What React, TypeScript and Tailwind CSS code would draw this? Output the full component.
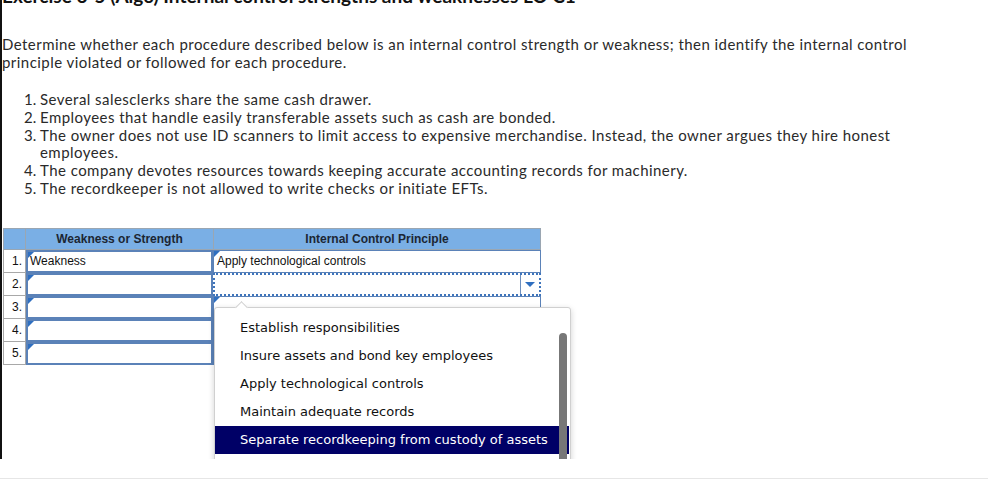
import React from "react";

const Flag = () => (
  <span className="absolute left-0 top-0 w-0 h-0 border-t-[6px] border-t-[#2f6fc0] border-r-[6px] border-r-transparent" />
);

const options = [
  "Establish responsibilities",
  "Insure assets and bond key employees",
  "Apply technological controls",
  "Maintain adequate records",
  "Separate recordkeeping from custody of assets",
];

const rows = [
  { n: "1.", ws: "Weakness", p: "Apply technological controls" },
  { n: "2.", ws: "", p: "" },
  { n: "3.", ws: "", p: "" },
  { n: "4.", ws: "", p: "" },
  { n: "5.", ws: "", p: "" },
];

export default function App() {
  return (
    <div className="w-[988px] h-[483px] bg-white overflow-hidden">
      <div className="relative h-[459px] border-l-2 border-[#111] overflow-hidden">
        <h1 className="mt-[-16px] text-[19px] leading-[24px] font-bold text-[#111] font-['Lato',sans-serif] whitespace-nowrap">
          Exercise 6-5 (Algo) Internal control strengths and weaknesses LO C1
        </h1>
        <p className="mt-[27px] text-[15px] leading-[18px] tracking-[0.45px] text-[#2a2a2a] font-['Lato',sans-serif] w-[915px]">
          Determine whether each procedure described below is an internal control strength or weakness; then identify the internal control principle violated or followed for each procedure.
        </p>
        <ol className="mt-[20px] pl-[22px] text-[15px] leading-[17.8px] tracking-[0.45px] text-[#2a2a2a] font-['Lato',sans-serif] w-[915px]">
          {[
            "Several salesclerks share the same cash drawer.",
            "Employees that handle easily transferable assets such as cash are bonded.",
            "The owner does not use ID scanners to limit access to expensive merchandise. Instead, the owner argues they hire honest employees.",
            "The company devotes resources towards keeping accurate accounting records for machinery.",
            "The recordkeeper is not allowed to write checks or initiate EFTs.",
          ].map((t, i) => (
            <li key={i} className="flex">
              <span className="w-[16px] shrink-0 tracking-normal">{i + 1}.</span>
              <span>{t}</span>
            </li>
          ))}
        </ol>

        <div className="mt-[30px] ml-[1px] w-[538px] font-['Liberation_Sans',Arial,sans-serif] text-[12px] text-[#111]">
          <div className="flex h-[22px] bg-[#7aafe5] border border-[#9aa6b2] font-bold text-[#1c2633]">
            <div className="w-[22px] border-r border-[#9aa6b2]" />
            <div className="w-[188px] flex items-center justify-center border-r border-[#9aa6b2]">Weakness or Strength</div>
            <div className="flex-1 flex items-center justify-center">Internal Control Principle</div>
          </div>
          {rows.map((r, i) => (
            <div key={i} className="flex h-[23px]">
              <div className="w-[23px] border-l border-b border-r border-[#a8a8a8] flex items-center justify-end pr-[3px] text-[12px]">
                {r.n}
              </div>
              <div className="relative w-[187px] border-2 border-[#5b82b8] bg-white flex items-center pl-[2px]">
                <Flag />
                {r.ws}
              </div>
              {i === 1 ? (
                <div className="relative flex-1 border-2 border-dotted border-[#3e74bb] bg-white flex">
                  <div className="flex-1" />
                  <div className="w-[19px] border-l border-[#6d8fbe] flex items-center justify-center">
                    <span className="w-0 h-0 border-l-[5px] border-r-[5px] border-t-[5px] border-l-transparent border-r-transparent border-t-[#2f6fc0]" />
                  </div>
                </div>
              ) : (
                <div className="relative flex-1 border border-[#5b82b8] bg-white flex items-center pl-[3px]">
                  <Flag />
                  {r.p}
                </div>
              )}
            </div>
          ))}
        </div>

        <div className="absolute left-[212px] top-[307px] w-[357px] h-[170px] bg-white border border-[#d0d0d0] rounded-[3px] shadow-[0_2px_6px_rgba(0,0,0,0.18)] font-['DejaVu_Sans',Verdana,sans-serif] text-[13px] text-[#111]">
          <span className="absolute left-[22px] top-[-5px] w-[9px] h-[9px] bg-white border-l border-t border-[#d0d0d0] rotate-45" />
          <div className="pt-[6px] pr-[1px]">
            {options.map((o, i) => (
              <div
                key={o}
                className={
                  "h-[28px] flex items-center pl-[25px] " +
                  (i === 4 ? "bg-[#000066] text-white" : "")
                }
              >
                {o}
              </div>
            ))}
          </div>
          <div className="absolute right-[3px] top-[25px] w-[8px] h-[140px] rounded-full bg-[#777]" />
        </div>
      </div>
      <div className="mt-[19px] border-t border-[#e6e6e6]" />
    </div>
  );
}
